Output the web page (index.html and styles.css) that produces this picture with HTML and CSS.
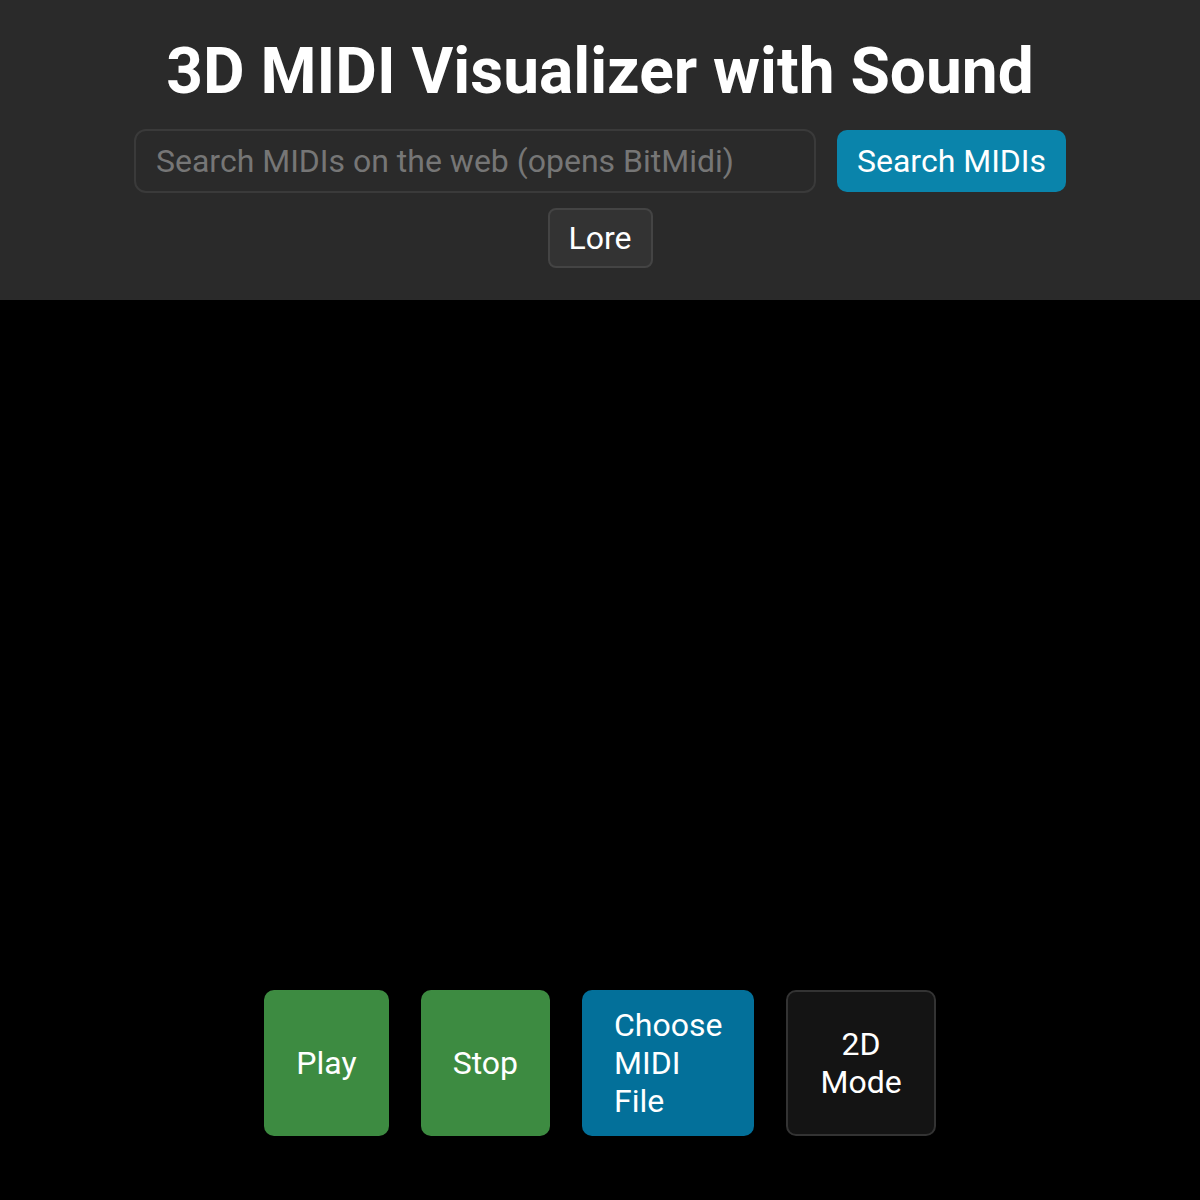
FILE: index.html
```html
<!DOCTYPE html>
<html lang="en">
<head>
    <meta charset="UTF-8">
    <meta name="viewport" content="width=device-width, initial-scale=1.0">
    <title>3D MIDI Visualizer with Sound</title>
    <link rel="stylesheet" href="styles.css">
</head>
<body>
    <header class="header">
        <h1>3D MIDI Visualizer with Sound</h1>
        <form class="search-row" id="searchForm">
            <input type="text" class="search-input" placeholder="Search MIDIs on the web (opens BitMidi)">
            <button type="submit" class="search-btn">Search MIDIs</button>
        </form>
        <button class="lore-btn">Lore</button>
    </header>

    <main class="stage">
        <div class="controls">
            <button class="ctrl-btn green">Play</button>
            <button class="ctrl-btn green">Stop</button>
            <label class="ctrl-btn blue">Choose MIDI File</label>
            <button class="ctrl-btn dark">2D Mode</button>
        </div>
    </main>
</body>
</html>
```

FILE: styles.css
```css
html, body {
    margin: 0;
    padding: 0;
    height: 100%;
}

body {
    font-family: Roboto, "Liberation Sans", sans-serif;
    background-color: #000;
    color: #fff;
    display: flex;
    flex-direction: column;
}

.header {
    background-color: #2a2a2a;
    padding: 34px 0 32px;
    display: flex;
    flex-direction: column;
    align-items: center;
}

h1 {
    margin: 0 0 20px;
    font-size: 64px;
    font-weight: 700;
    line-height: 75px;
}

.search-row {
    display: flex;
    gap: 21px;
    align-items: center;
    margin-bottom: 15px;
}

.search-input {
    width: 682px;
    height: 64px;
    box-sizing: border-box;
    padding: 0 20px;
    background-color: #2a2a2a;
    border: 2px solid #3a3a3a;
    border-radius: 12px;
    color: #fff;
    font-family: inherit;
    font-size: 32px;
    outline: none;
    flex-shrink: 0;
}

.search-input::placeholder {
    color: #767676;
}

.search-btn {
    height: 62px;
    padding: 0 20px;
    background-color: #0a84ab;
    color: #fff;
    border: none;
    border-radius: 10px;
    font-family: inherit;
    font-size: 32px;
    cursor: pointer;
}

.lore-btn {
    height: 60px;
    padding: 0 19px;
    background-color: #333;
    color: #fff;
    border: 2px solid #444;
    border-radius: 8px;
    font-family: inherit;
    font-size: 32px;
    cursor: pointer;
}

/* Visualizer area */
.stage {
    flex: 1;
    display: flex;
    flex-direction: column;
    justify-content: flex-end;
    padding-bottom: 64px;
}

.controls {
    display: flex;
    justify-content: center;
    gap: 32px;
}

.ctrl-btn {
    width: min-content;
    display: flex;
    align-items: center;
    padding: 16px 32px;
    border: none;
    border-radius: 10px;
    color: #fff;
    font-family: inherit;
    font-size: 32px;
    line-height: 38px;
    text-align: center;
    cursor: pointer;
}

.green {
    background-color: #3d8b41;
}

.blue {
    background-color: #03709a;
    text-align: left;
}

.dark {
    background-color: #141414;
    border: 2px solid #333;
}
```
